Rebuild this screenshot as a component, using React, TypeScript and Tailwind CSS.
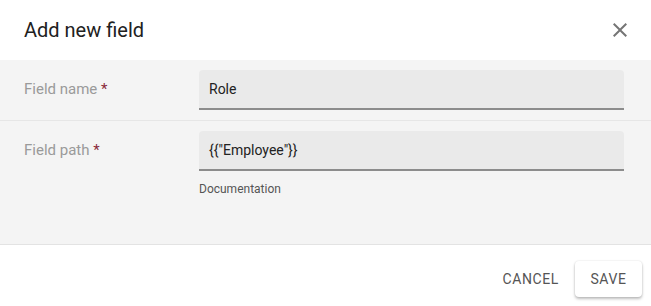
import React from 'react';

const CloseIcon = () => (
  <svg width="24" height="24" viewBox="0 0 24 24" fill="currentColor">
    <path d="M19 6.41 17.59 5 12 10.59 6.41 5 5 6.41 10.59 12 5 17.59 6.41 19 12 13.41 17.59 19 19 17.59 13.41 12z" />
  </svg>
);

interface FieldRowProps {
  label: string;
  value: string;
  helper?: string;
  last?: boolean;
}

const FieldRow: React.FC<FieldRowProps> = ({ label, value, helper, last }) => (
  <div className={`flex pl-6 pr-[27px] pt-[10px] ${last ? 'pb-0' : 'pb-[10px] border-b border-[#e6e6e6]'}`}>
    <div className="w-[175px] shrink-0 pt-[8px] text-[15px] text-[#9a9a9a]">
      {label} <span className="text-[#8a2a3a]">*</span>
    </div>
    <div className="flex-1">
      <div className="h-[40px] bg-[#eaeaea] rounded-t-[4px] border-b-2 border-[#8c8c8c] flex items-center px-[10px] text-[14px] text-[#222]">
        {value}
      </div>
      {helper && <div className="mt-[9px] text-[12px] text-[#555]">{helper}</div>}
    </div>
  </div>
);

export default function App() {
  return (
    <div className="w-[651px] h-[306px] bg-white font-['Roboto',sans-serif] flex flex-col">
      <div className="h-[60px] flex items-center justify-between pl-6 pr-[19px] shrink-0">
        <h2 className="text-[20px] font-normal text-[#212121]">Add new field</h2>
        <button className="text-[#757575]"><CloseIcon /></button>
      </div>
      <div className="h-[185px] bg-[#f4f4f4] border-b border-[#e3e3e3] shrink-0">
        <FieldRow label="Field name" value="Role" />
        <FieldRow label="Field path" value={'{{"Employee"}}'} helper="Documentation" last />
      </div>
      <div className="flex-1 flex items-start justify-end gap-[8px] pr-[9px] pt-[16px]">
        <button className="h-[36px] px-[8px] text-[14px] font-normal tracking-[0.6px] text-[#555] uppercase">Cancel</button>
        <button className="h-[36px] w-[67px] rounded-[4px] bg-white text-[14px] font-normal tracking-[0.6px] text-[#555] uppercase shadow-[0_2px_3px_rgba(0,0,0,0.25),0_0_2px_rgba(0,0,0,0.12)]">Save</button>
      </div>
    </div>
  );
}
